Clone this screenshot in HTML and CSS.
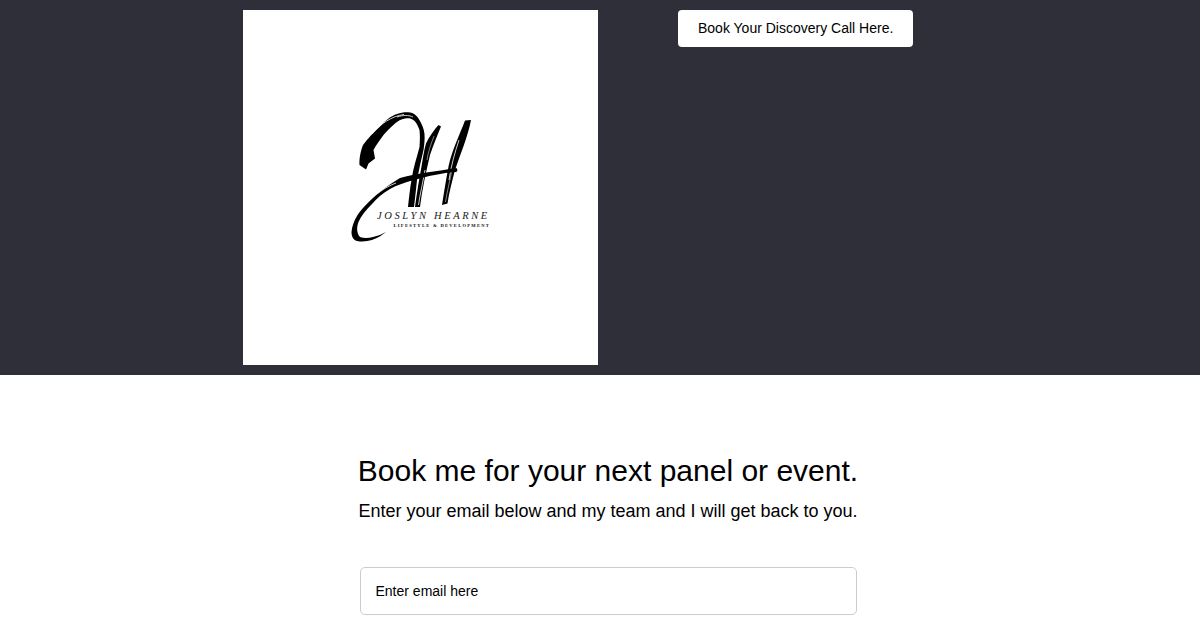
FILE: index.html
```html
<!DOCTYPE html>
<html lang="en">

<head>
    <meta charset="UTF-8">
    <meta name="viewport" content="width=device-width, initial-scale=1.0">
    <title>Joslyn Hearne</title>
    <link rel="stylesheet" href="styles.css">
</head>

<body>

    <header class="hero">
        <div class="logo-box">
            <svg class="logo" viewBox="243 10 355 355" width="355" height="355">
                <!-- J stroke -->
                <path class="ink" d="M366 169.5 L359.5 165 C359 158 361 150 363 145 C368 138 374 132 380 126.5 C386 120 391 116 397 114 C402 112 407 112 410 112.5 C414 113 417 116 418.5 118.5 C422 124 424 129 424.5 134 C425 140 424 146 423.5 150 C421 160 419 170 417 180 C416 190 415 198 414 207 L408 207 C409 198 410 188 411.5 180 C413 168 417 157 419.5 147 C420 140 420 135 419.5 130 C418 126 416 122 414 120.5 C411 118 408 118 405 118.5 C401 119 398 121 395 123.5 C391 127 387 131 383.5 135 C380 140 376 145 373.5 150 L375 158.5 L368.5 163.5 Z"/>
                <path class="cut" d="M372 134 C380 124 392 116 404 114.5"/>
                <path class="cut" d="M397 117 C403 115 409 115 413 117"/>
                <!-- H left stem -->
                <path class="ink" d="M438.5 125 L441 126.5 C437 136 433 146 430 155 C426 172 422 190 420 207 L415 207 C417 192 419 180 421.5 166.5 C423 158 424 150 426 143.5 C429 137 434 130 438.5 125 Z"/>
                <path class="cut" d="M425 170 C423 182 420 194 418.5 205"/>
                <path class="cut thin" d="M434 136 C431 144 428 152 427 160"/>
                <!-- H right stem -->
                <path class="ink" d="M465 120.5 L471 120 C468 136 460 155 455 170 C452 182 449 193 447.5 203.5 L442 205 C444 192 446 180 448.5 166.5 C452 150 460 134 465 120.5 Z"/>
                <path class="cut" d="M459 140 C455 152 451 166 449 180"/>
                <path class="cut thin" d="M452 170 C450 180 447 192 445.5 202"/>
                <!-- cross stroke and hook -->
                <path class="ink" d="M456.5 168 C458 170 457.5 171.5 456 172 C442 173 428 176 412 180.5 C404 183 397 185 390 189 C383 193 377 198 372 204 C366 210 361 216 358.5 222 C356.5 227 356.5 233 360 237 C364 238.5 369 238 373 237 C378 236 382 234 386 232 C382 235 378 238 372 240 C367 241.5 362 242 357 241 C353 240 351.5 236 351.5 232 C352 226 354 221 357 216 C361 209 368 203 375 196 C382 190 390 184 400 178 C418 173 438 171 456.5 168 Z"/>
                <path class="cut" d="M372 198 C380 191 388 186 396 183"/>
                <text class="logo-name" x="377" y="218.5">JOSLYN HEARNE</text>
                <text class="logo-tag" x="393.5" y="227">LIFESTYLE &amp; DEVELOPMENT</text>
            </svg>
        </div>
        <a class="call-button" href="#">Book Your Discovery Call Here.</a>
    </header>

    <section class="signup">
        <h1>Book me for your next panel or event.</h1>
        <p>Enter your email below and my team and I will get back to you.</p>
        <input class="email-input" type="email" placeholder="Enter email here">
    </section>

</body>

</html>
```

FILE: styles.css
```css
/* Global Styles */
body {
    font-family: "Liberation Sans", Arial, sans-serif;
    background-color: #ffffff;
    color: #000000;
    margin: 0;
    height: 630px;
    overflow: hidden;
}

/* Dark top band */
.hero {
    background-color: #2f2f3a;
    height: 375px;
    box-sizing: border-box;
    padding: 10px 0 10px 243px;
    display: flex;
    align-items: flex-start;
    gap: 80px;
}

.logo-box {
    background-color: #ffffff;
    width: 355px;
    height: 355px;
}

.logo {
    display: block;
}

.ink {
    fill: #000000;
}

.cut {
    fill: none;
    stroke: #ffffff;
    stroke-width: 0.8;
}

.cut.thin {
    stroke-width: 0.5;
}

.logo-name {
    font-family: "Liberation Serif", serif;
    font-style: italic;
    font-size: 10.5px;
    letter-spacing: 2.62px;
    fill: #222222;
}

.logo-tag {
    font-family: "Liberation Serif", serif;
    font-size: 4.6px;
    font-weight: bold;
    letter-spacing: 1.25px;
    fill: #111111;
}

.call-button {
    display: block;
    background-color: #ffffff;
    color: #000000;
    text-decoration: none;
    font-size: 14px;
    line-height: 17px;
    padding: 10px 20px;
    border-radius: 4px;
}

/* Email form */
.signup {
    display: flex;
    flex-direction: column;
    align-items: center;
    padding: 78px 0 0 16px;
}

.signup h1 {
    font-size: 30px;
    font-weight: normal;
    line-height: 36px;
    margin: 0;
}

.signup p {
    font-size: 18px;
    line-height: 22px;
    margin: 11px 0 0 0;
}

.email-input {
    width: 497px;
    height: 48px;
    box-sizing: border-box;
    margin-top: 45px;
    padding: 0 15px;
    border: 1px solid #cccccc;
    border-radius: 5px;
    font-family: "Liberation Sans", Arial, sans-serif;
    font-size: 14px;
    color: #000000;
}

.email-input::placeholder {
    color: #000000;
    opacity: 1;
}
```
